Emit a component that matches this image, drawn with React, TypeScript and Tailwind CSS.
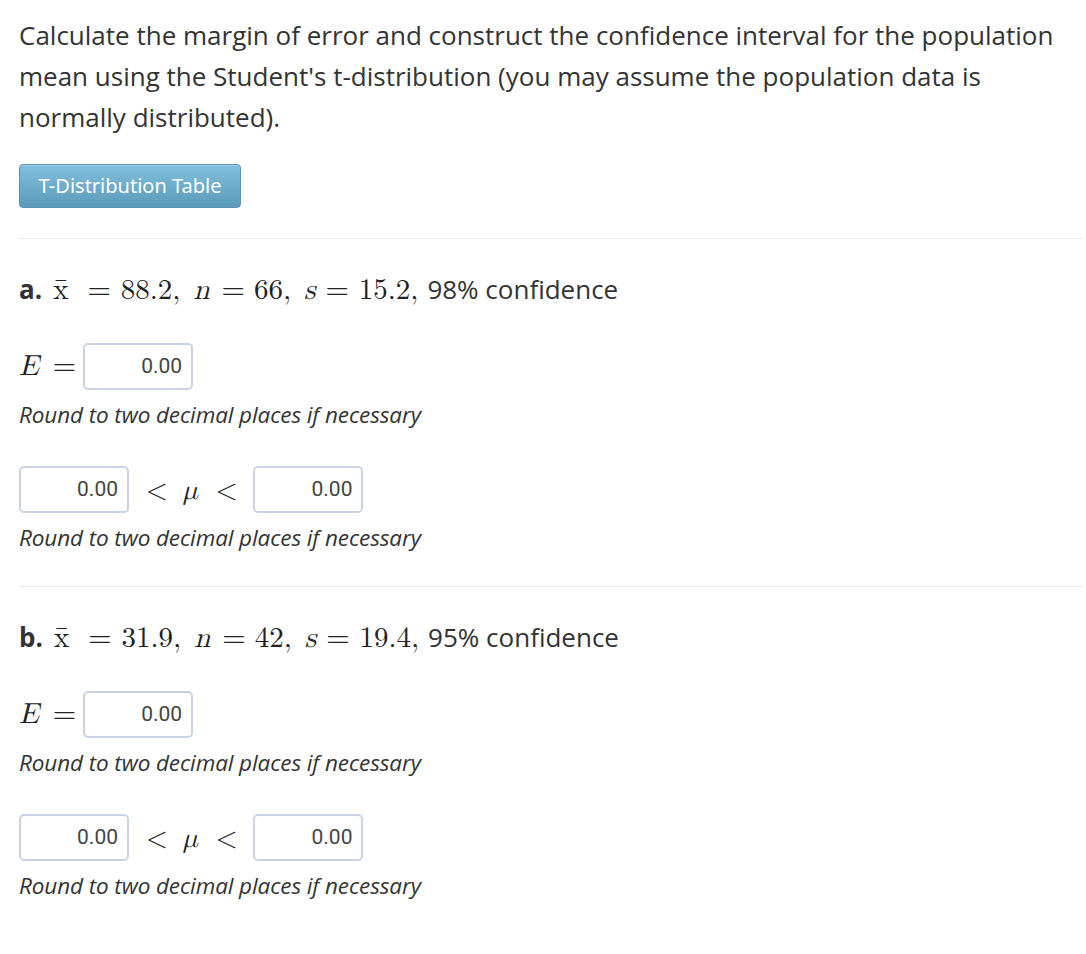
import React from "react";

const serif = { fontFamily: '"Latin Modern Math","Liberation Serif","DejaVu Serif",serif' };

function Box() {
  return (
    <div className="w-[110px] h-[47px] rounded-[5px] border-2 border-[#c9d3e3] bg-white flex items-center justify-end pr-[9px] text-[21px] text-[#444] font-['Roboto',sans-serif]">
      0.00
    </div>
  );
}

function Note() {
  return (
    <div className="h-[28px] leading-[28px] text-[22.5px] italic text-[#333] tracking-[-0.1px]">
      Round to two decimal places if necessary
    </div>
  );
}

function Part({ label, xbar, n, s, conf }: { label: string; xbar: string; n: string; s: string; conf: string }) {
  return (
    <div className="border-t border-[#eaeaea]">
      <div className="pt-[29px] h-[71px] flex items-baseline text-[#222]">
        <span className="font-bold text-[26px] text-[#333]">{label}.</span>
        <span className="ml-[11px] text-[29px]" style={serif}>x̄</span>
        <span className="ml-[19px] text-[30px]" style={serif}>=</span>
        <span className="ml-[10px] text-[29px]" style={serif}>{xbar},</span>
        <span className="ml-[13px] text-[29px] italic" style={serif}>n</span>
        <span className="ml-[12px] text-[30px]" style={serif}>=</span>
        <span className="ml-[9px] text-[29px]" style={serif}>{n},</span>
        <span className="ml-[13px] text-[29px] italic" style={serif}>s</span>
        <span className="ml-[10px] text-[30px]" style={serif}>=</span>
        <span className="ml-[10px] text-[29px]" style={serif}>{s},</span>
        <span className="ml-[9px] text-[26px] text-[#333]">{conf}% confidence</span>
      </div>
      <div className="mt-[33px] flex items-center">
        <span className="text-[29px] italic text-[#222]" style={serif}>E</span>
        <span className="ml-[14px] text-[30px] text-[#222]" style={serif}>=</span>
        <div className="ml-[7px]">
          <Box />
        </div>
      </div>
      <div className="mt-[11px]">
        <Note />
      </div>
      <div className="mt-[37px] flex items-center">
        <Box />
        <span className="ml-[17px] text-[28px] text-[#222]" style={serif}>&lt;</span>
        <span className="ml-[15px] text-[28px] italic text-[#222]" style={serif}>μ</span>
        <span className="ml-[18px] text-[28px] text-[#222]" style={serif}>&lt;</span>
        <div className="ml-[16px]">
          <Box />
        </div>
      </div>
      <div className="mt-[11px] mb-[34px]">
        <Note />
      </div>
    </div>
  );
}

export default function App() {
  return (
    <div className="bg-white min-h-[954px] pl-[19px] pr-[3px] pt-[15px] font-['Open_Sans',sans-serif] text-[#333]">
      <p className="text-[26px] leading-[41px] pr-[10px]">
        Calculate the margin of error and construct the confidence interval for the population mean using the Student's t-distribution (you may assume the population data is normally distributed).
      </p>
      <button className="mt-[26px] h-[44px] w-[222px] rounded-[4px] border border-[#5a93ae] bg-gradient-to-b from-[#80c0de] to-[#5b9ab8] text-white text-[20px] font-['Noto_Sans',sans-serif] shadow-[inset_0_1px_0_rgba(255,255,255,0.25)]">
        T-Distribution Table
      </button>
      <div className="mt-[30px]">
        <Part label="a" xbar="88.2" n="66" s="15.2" conf="98" />
        <Part label="b" xbar="31.9" n="42" s="19.4" conf="95" />
      </div>
    </div>
  );
}
